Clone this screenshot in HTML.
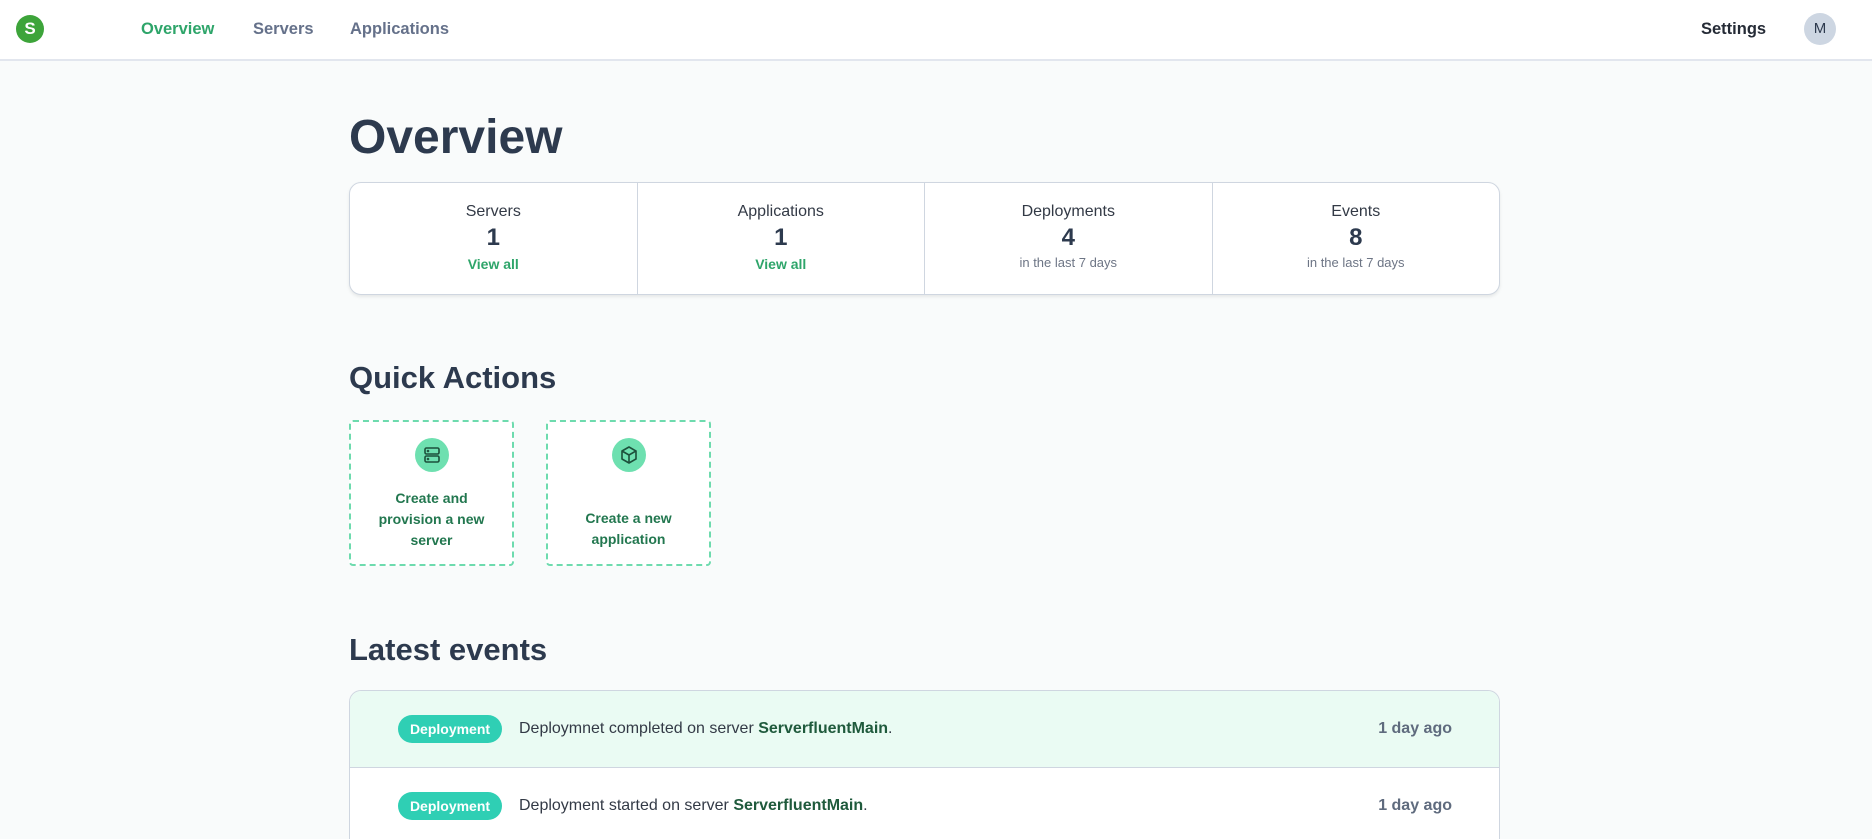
<!DOCTYPE html>
<html style="width:1872px;height:839px;overflow:hidden"><head><meta charset="utf-8"><style>
*{box-sizing:border-box;margin:0;padding:0}
html,body{width:1872px;height:839px;overflow:hidden}
body{background:#f9fbfb;font-family:"Liberation Sans",sans-serif;color:#2d3a4e;position:relative}
.hdr{position:absolute;left:0;top:0;width:1872px;height:61px;background:#fff;border-bottom:2px solid #e2e6ee}
.abs{position:absolute;white-space:nowrap}
.nav{font-size:16.5px;font-weight:bold;color:#65718a;top:20px}
.card{position:absolute;left:349px;top:182px;width:1151px;height:113px;background:#fff;border:1px solid #cfd6e0;border-radius:12px;box-shadow:0 2px 3px rgba(0,0,0,.08);display:flex}
.cell{flex:1;border-right:1px solid #cfd6e0;text-align:center;padding-top:20px}
.cell:last-child{border:none}
.cell .l{font-size:16px;color:#333a46}
.cell .n{font-size:24px;font-weight:bold;color:#2d3a4e;margin-top:3px;line-height:28px}
.cell .s{font-size:13px;color:#6d7585;margin-top:3px}
.cell .v{font-size:14px;font-weight:bold;color:#2ea56a;margin-top:4px}
h2{position:absolute;font-size:31px;font-weight:bold;color:#2d3a4e}
.qa{position:absolute;top:420px;width:165px;height:146px;border:2px dashed #6edbae;border-radius:4px;background:#fff;text-align:center;font-size:14px;font-weight:bold;color:#22774f;line-height:21px}
.ic{position:absolute;left:64px;top:16px;width:34px;height:34px;border-radius:50%;background:#6ee0b0}
.ev{position:absolute;left:349px;top:690px;width:1151px;height:149px;border:1px solid #cfd6e0;border-bottom:none;border-radius:12px 12px 0 0;background:#fff;overflow:hidden}
.row{height:77px;position:relative;border-bottom:1px solid #cfd6e0}
.badge{position:absolute;left:48px;top:24px;width:104px;height:28px;border-radius:14px;background:#2fcfb4;color:#fff;font-weight:bold;font-size:14px;text-align:center;line-height:28px}
.txt{position:absolute;left:169px;top:29px;font-size:16px;color:#333a46}
.txt b{color:#1f5a3c}
.ago{position:absolute;right:47px;top:29px;font-size:16px;font-weight:bold;color:#5f6b7e}
</style></head><body>
<div class="hdr">
 <div class="abs" style="left:16px;top:15px;width:28px;height:28px;border-radius:50%;background:#3da43a;color:#fff;font-weight:bold;font-size:17px;text-align:center;line-height:28px">S</div>
 <div class="abs nav" style="left:141px;color:#2ea56a">Overview</div>
 <div class="abs nav" style="left:253px">Servers</div>
 <div class="abs nav" style="left:350px">Applications</div>
 <div class="abs" style="left:1701px;top:20px;font-size:16.5px;font-weight:bold;color:#252b36">Settings</div>
 <div class="abs" style="left:1804px;top:13px;width:32px;height:32px;border-radius:50%;background:#cdd6e2;text-align:center;line-height:32px;font-size:15px;color:#2d3a4e">M</div>
</div>
<div class="abs" style="left:349px;top:110px;font-size:48px;font-weight:bold;color:#2d3a4e">Overview</div>
<div class="card">
 <div class="cell"><div class="l">Servers</div><div class="n">1</div><div class="v">View all</div></div>
 <div class="cell"><div class="l">Applications</div><div class="n">1</div><div class="v">View all</div></div>
 <div class="cell"><div class="l">Deployments</div><div class="n">4</div><div class="s">in the last 7 days</div></div>
 <div class="cell"><div class="l">Events</div><div class="n">8</div><div class="s">in the last 7 days</div></div>
</div>
<h2 style="left:349px;top:360px">Quick Actions</h2>
<div class="qa" style="left:349px">
 <div class="ic"><svg width="34" height="34" viewBox="0 0 34 34" fill="none" stroke="#1c4f3a" stroke-width="1.6"><rect x="10" y="10" width="14" height="6" rx="1.5"/><rect x="10" y="18" width="14" height="6" rx="1.5"/><circle cx="13" cy="13" r=".5"/><circle cx="13" cy="21" r=".5"/></svg></div>
 <div style="position:absolute;left:0;right:0;top:66px">Create and<br>provision a new<br>server</div>
</div>
<div class="qa" style="left:546px">
 <div class="ic"><svg width="34" height="34" viewBox="0 0 34 34" fill="none" stroke="#1c4f3a" stroke-width="1.6" stroke-linejoin="round"><path d="M17 9l7 4v8l-7 4-7-4v-8z M10 13l7 4 7-4 M17 17v8"/></svg></div>
 <div style="position:absolute;left:0;right:0;top:86px">Create a new<br>application</div>
</div>
<h2 style="left:349px;top:632px">Latest events</h2>
<div class="ev">
 <div class="row" style="background:#eafbf3"><div class="badge">Deployment</div><div class="txt">Deploymnet completed on server <b>ServerfluentMain</b>.</div><div class="ago">1 day ago</div></div>
 <div class="row" style="border-bottom:none"><div class="badge">Deployment</div><div class="txt">Deployment started on server <b>ServerfluentMain</b>.</div><div class="ago">1 day ago</div></div>
</div>
</body></html>
